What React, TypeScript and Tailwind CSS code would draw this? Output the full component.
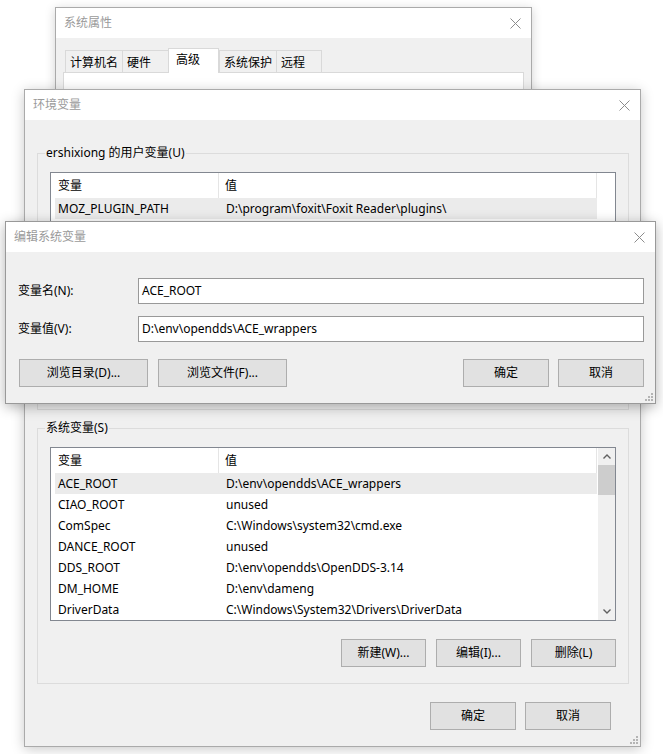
import React from "react";

type Row = { name: string; value: string };

const userRows: Row[] = [
  { name: "MOZ_PLUGIN_PATH", value: "D:\\program\\foxit\\Foxit Reader\\plugins\\" },
];

const systemRows: Row[] = [
  { name: "ACE_ROOT", value: "D:\\env\\opendds\\ACE_wrappers" },
  { name: "CIAO_ROOT", value: "unused" },
  { name: "ComSpec", value: "C:\\Windows\\system32\\cmd.exe" },
  { name: "DANCE_ROOT", value: "unused" },
  { name: "DDS_ROOT", value: "D:\\env\\opendds\\OpenDDS-3.14" },
  { name: "DM_HOME", value: "D:\\env\\dameng" },
  { name: "DriverData", value: "C:\\Windows\\System32\\Drivers\\DriverData" },
];

function CloseIcon() {
  return (
    <svg width="11" height="11" viewBox="0 0 11 11">
      <path d="M0.5 0.5 L10.5 10.5 M10.5 0.5 L0.5 10.5" stroke="#8c8c8c" strokeWidth="1" fill="none" />
    </svg>
  );
}

function Grip() {
  return (
    <svg className="absolute bottom-[2px] right-[2px]" width="8" height="8" viewBox="0 0 8 8">
      <rect x="6" y="0" width="2" height="2" fill="#b4b4b4" />
      <rect x="3" y="3" width="2" height="2" fill="#b4b4b4" />
      <rect x="6" y="3" width="2" height="2" fill="#b4b4b4" />
      <rect x="0" y="6" width="2" height="2" fill="#b4b4b4" />
      <rect x="3" y="6" width="2" height="2" fill="#b4b4b4" />
      <rect x="6" y="6" width="2" height="2" fill="#b4b4b4" />
    </svg>
  );
}

function TitleBar({ title }: { title: string }) {
  return (
    <div className="flex h-[30px] shrink-0 items-center justify-between bg-white pl-[8px] pr-[10px]">
      <span className="text-[12px] text-[#9a9a9a]">{title}</span>
      <CloseIcon />
    </div>
  );
}

function Button({ label, w = "w-[85px]" }: { label: string; w?: string }) {
  return (
    <div className={`flex h-[28px] items-center justify-center border border-[#adadad] bg-[#e1e1e1] text-black ${w}`}>
      {label}
    </div>
  );
}

function Chevron({ up }: { up?: boolean }) {
  return (
    <svg width="8" height="5" viewBox="0 0 8 5">
      <path d={up ? "M0.5 4.5 L4 1 L7.5 4.5" : "M0.5 0.5 L4 4 L7.5 0.5"} stroke="#606060" strokeWidth="1.4" fill="none" />
    </svg>
  );
}

function VarList({ rows, height, scroll }: { rows: Row[]; height: string; scroll?: boolean }) {
  return (
    <div className={`flex overflow-hidden border border-[#828790] bg-white pl-[4px] ${height}`}>
      <div className="w-[542px] shrink-0">
        <div className="flex h-[25px] items-center">
          <div className="flex h-full w-[164px] items-center border-r border-[#e5e5e5] pl-[3px]">变量</div>
          <div className="flex h-full flex-1 items-center border-r border-[#e5e5e5] pl-[6px]">值</div>
        </div>
        {rows.map((r, i) => (
          <div key={r.name} className={`flex h-[21px] items-center ${i === 0 ? "bg-[#ebebeb]" : ""}`}>
            <div className="w-[164px] pl-[3px]">{r.name}</div>
            <div className="flex-1 whitespace-nowrap pl-[7px]">{r.value}</div>
          </div>
        ))}
      </div>
      <div className="flex-1" />
      {scroll && (
        <div className="flex w-[17px] shrink-0 flex-col bg-[#f0f0f0]">
          <div className="flex h-[17px] items-center justify-center">
            <Chevron up />
          </div>
          <div className="h-[30px] bg-[#cdcdcd]" />
          <div className="flex-1" />
          <div className="flex h-[17px] items-center justify-center">
            <Chevron />
          </div>
        </div>
      )}
    </div>
  );
}

function Group({ title, children }: { title: string; children: React.ReactNode }) {
  return (
    <fieldset className="border border-[#dcdcdc] p-0">
      <legend className="ml-[7px] px-[1px] leading-[16px]">{title}</legend>
      <div className="px-[12px] pb-[16px] pt-[11px]">{children}</div>
    </fieldset>
  );
}

const tabs = [
  { label: "计算机名", w: "w-[58px]" },
  { label: "硬件", w: "w-[47px]" },
  { label: "高级", w: "w-[51px]", active: true },
  { label: "系统保护", w: "w-[58px]" },
  { label: "远程", w: "w-[46px]" },
];

export default function App() {
  return (
    <div className="relative h-[754px] w-[663px] overflow-hidden bg-white font-['Noto_Sans','Noto_Sans_CJK_SC',sans-serif] text-[12px] text-black">
      {/* 系统属性 */}
      <div className="absolute left-[55px] top-[7px] h-[250px] w-[477px] border border-[#aaaaaa] bg-[#f0f0f0] shadow-[0_2px_10px_rgba(0,0,0,0.18)]">
        <TitleBar title="系统属性" />
        <div className="px-[7px] pt-[10px]">
          <div className="flex items-end pl-[2px]">
            {tabs.map((t) =>
              t.active ? (
                <div key={t.label} className={`relative z-10 -mb-px h-[25px] border border-b-0 border-[#d9d9d9] bg-white pl-[7px] pt-[2px] ${t.w}`}>
                  {t.label}
                </div>
              ) : (
                <div key={t.label} className={`-mr-px h-[22px] border border-b-0 border-[#d9d9d9] bg-[#f0f0f0] pl-[4px] pt-[3px] ${t.w}`}>
                  {t.label}
                </div>
              )
            )}
          </div>
          <div className="h-[200px] border border-[#d9d9d9] bg-white" />
        </div>
      </div>

      {/* 环境变量 */}
      <div className="absolute left-[24px] top-[89px] flex h-[658px] w-[617px] flex-col border border-[#aaaaaa] bg-[#f0f0f0] shadow-[0_2px_12px_rgba(0,0,0,0.22)]">
        <TitleBar title="环境变量" />
        <div className="flex flex-col pl-[12px] pr-[11px] pt-[25px]">
          <Group title="ershixiong 的用户变量(U)">
            <VarList rows={userRows} height="h-[175px]" />
            {/* buttons of this group sit behind the edit dialog */}
            <div className="mt-[18px] h-[28px]" />
          </Group>
          <div className="mt-[10px]">
            <Group title="系统变量(S)">
              <VarList rows={systemRows} height="h-[174px]" scroll />
              <div className="mt-[18px] flex justify-end gap-[10px]">
                <Button label="新建(W)..." />
                <Button label="编辑(I)..." />
                <Button label="删除(L)" />
              </div>
            </Group>
          </div>
          <div className="mt-[18px] flex justify-end gap-[9px] pr-[18px]">
            <Button label="确定" w="w-[86px]" />
            <Button label="取消" w="w-[86px]" />
          </div>
        </div>
        <Grip />
      </div>

      {/* 编辑系统变量 */}
      <div className="absolute left-[5px] top-[221px] flex h-[183px] w-[651px] flex-col border border-[#999999] bg-[#f0f0f0] shadow-[0_3px_12px_rgba(0,0,0,0.3)]">
        <TitleBar title="编辑系统变量" />
        <div className="flex flex-col pl-[12px] pr-[11px] pt-[26px]">
          <div className="flex items-center">
            <div className="w-[120px]">变量名(N):</div>
            <div className="flex h-[26px] flex-1 items-center border border-[#999999] bg-white pl-[3px]">ACE_ROOT</div>
          </div>
          <div className="mt-[12px] flex items-center">
            <div className="w-[120px]">变量值(V):</div>
            <div className="flex h-[26px] flex-1 items-center border border-[#999999] bg-white pl-[3px]">D:\env\opendds\ACE_wrappers</div>
          </div>
          <div className="mt-[17px] flex items-center pl-[1px]">
            <Button label="浏览目录(D)..." w="w-[129px]" />
            <div className="ml-[10px]">
              <Button label="浏览文件(F)..." w="w-[129px]" />
            </div>
            <div className="flex-1" />
            <div className="flex gap-[9px]">
              <Button label="确定" w="w-[86px]" />
              <Button label="取消" w="w-[86px]" />
            </div>
          </div>
        </div>
        <Grip />
      </div>
    </div>
  );
}
